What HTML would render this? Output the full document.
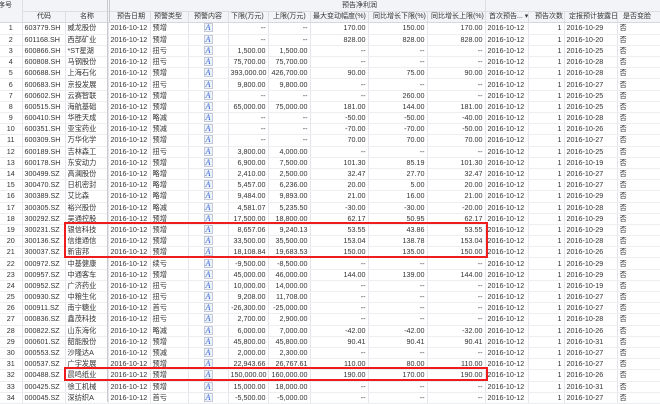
<!DOCTYPE html>
<html><head><meta charset="utf-8"><style>
*{margin:0;padding:0;box-sizing:border-box}
body{width:660px;height:402px;overflow:hidden;background:#fff;font-family:"Liberation Sans","Noto Sans CJK SC",sans-serif;font-size:7px;color:#333;position:relative}
.hd{position:absolute;left:0;top:0;width:660px;height:23px;background:#f3f4f7;border-bottom:1px solid #d6d8de}
.hd div{position:absolute;font-size:7px;line-height:11px;color:#333;white-space:nowrap}
.vl{position:absolute;width:1px;background:#dcdee4}
table{position:absolute;left:0;top:23px;border-collapse:collapse;table-layout:fixed;width:660px}
td{height:11.2px;line-height:10px;padding:0 2px;border-right:1px solid #e4e6ec;border-bottom:1px solid #eceef2;white-space:nowrap;overflow:hidden;font-size:7.2px}
tr{height:11.2px}
.c{text-align:center}.r{text-align:right}
.a{display:inline-block;width:9px;height:9px;border:1px solid #c4cad8;background:#eef2fa;color:#2b5bd0;font-style:italic;font-size:8px;line-height:8px;text-align:center;font-family:"Liberation Serif",serif;vertical-align:top}
.box{position:absolute;border:2px solid #ee1c1c}
</style></head><body>
<div class="hd">
<div style="left:-2px;top:0">序号</div>
<div style="left:342px;top:0">预告净利润</div>
<div style="left:22px;top:11px;width:638px;height:1px;background:#dcdee4"></div>
<div style="left:37px;top:11px">代码</div>
<div style="left:80px;top:11px">名称</div>
<div style="left:117px;top:11px">预告日期</div>
<div style="left:154px;top:11px">预警类型</div>
<div style="left:194px;top:11px">预警内容</div>
<div style="left:231px;top:11px">下限(万元)</div>
<div style="left:273px;top:11px">上限(万元)</div>
<div style="left:313px;top:11px">最大变动幅度(%)</div>
<div style="left:373px;top:11px">同比增长下限(%)</div>
<div style="left:431px;top:11px">同比增长上限(%)</div>
<div style="left:489px;top:11px">首次预告... ▾</div>
<div style="left:535px;top:11px">预告次数</div>
<div style="left:569px;top:11px">定报预计披露日</div>
<div style="left:623px;top:11px">是否变脸</div>
</div>
<div class="vl" style="left:22px;top:0;height:23px"></div>
<div class="vl" style="left:107px;top:0;height:23px;background:#c8cad0"></div>
<div class="vl" style="left:109px;top:0;height:23px;background:#c8cad0"></div>
<div class="vl" style="left:485px;top:0;height:11px"></div>
<div class="vl" style="left:65px;top:11px;height:12px"></div>
<div class="vl" style="left:150px;top:11px;height:12px"></div>
<div class="vl" style="left:188px;top:11px;height:12px"></div>
<div class="vl" style="left:228px;top:11px;height:12px"></div>
<div class="vl" style="left:268px;top:11px;height:12px"></div>
<div class="vl" style="left:310px;top:11px;height:12px"></div>
<div class="vl" style="left:368px;top:11px;height:12px"></div>
<div class="vl" style="left:427px;top:11px;height:12px"></div>
<div class="vl" style="left:485px;top:11px;height:12px"></div>
<div class="vl" style="left:528px;top:11px;height:12px"></div>
<div class="vl" style="left:564px;top:11px;height:12px"></div>
<div class="vl" style="left:617px;top:11px;height:12px"></div>
<table>
<colgroup><col style="width:22px"><col style="width:43px"><col style="width:43px"><col style="width:42px"><col style="width:38px"><col style="width:40px"><col style="width:40px"><col style="width:42px"><col style="width:58px"><col style="width:59px"><col style="width:58px"><col style="width:43px"><col style="width:36px"><col style="width:53px"><col style="width:43px"></colgroup>
<tr><td class="c">1</td><td>603779.SH</td><td>威龙股份</td><td>2016-10-12</td><td>预增</td><td class="c"><span class="a">A</span></td><td class="r">--</td><td class="r">--</td><td class="r">170.00</td><td class="r">150.00</td><td class="r">170.00</td><td>2016-10-12</td><td class="r">1</td><td>2016-10-29</td><td>否</td></tr>
<tr><td class="c">2</td><td>601168.SH</td><td>西部矿业</td><td>2016-10-12</td><td>预增</td><td class="c"><span class="a">A</span></td><td class="r">--</td><td class="r">--</td><td class="r">828.00</td><td class="r">828.00</td><td class="r">828.00</td><td>2016-10-12</td><td class="r">1</td><td>2016-10-20</td><td>否</td></tr>
<tr><td class="c">3</td><td>600866.SH</td><td>*ST星湖</td><td>2016-10-12</td><td>扭亏</td><td class="c"><span class="a">A</span></td><td class="r">1,500.00</td><td class="r">1,500.00</td><td class="r">--</td><td class="r">--</td><td class="r">--</td><td>2016-10-12</td><td class="r">1</td><td>2016-10-25</td><td>否</td></tr>
<tr><td class="c">4</td><td>600808.SH</td><td>马钢股份</td><td>2016-10-12</td><td>扭亏</td><td class="c"><span class="a">A</span></td><td class="r">75,700.00</td><td class="r">75,700.00</td><td class="r">--</td><td class="r">--</td><td class="r">--</td><td>2016-10-12</td><td class="r">1</td><td>2016-10-28</td><td>否</td></tr>
<tr><td class="c">5</td><td>600688.SH</td><td>上海石化</td><td>2016-10-12</td><td>预增</td><td class="c"><span class="a">A</span></td><td class="r">393,000.00</td><td class="r">426,700.00</td><td class="r">90.00</td><td class="r">75.00</td><td class="r">90.00</td><td>2016-10-12</td><td class="r">1</td><td>2016-10-28</td><td>否</td></tr>
<tr><td class="c">6</td><td>600683.SH</td><td>京投发展</td><td>2016-10-12</td><td>扭亏</td><td class="c"><span class="a">A</span></td><td class="r">9,800.00</td><td class="r">9,800.00</td><td class="r">--</td><td class="r">--</td><td class="r">--</td><td>2016-10-12</td><td class="r">1</td><td>2016-10-27</td><td>否</td></tr>
<tr><td class="c">7</td><td>600602.SH</td><td>云赛智联</td><td>2016-10-12</td><td>预增</td><td class="c"><span class="a">A</span></td><td class="r">--</td><td class="r">--</td><td class="r">--</td><td class="r">260.00</td><td class="r">--</td><td>2016-10-12</td><td class="r">1</td><td>2016-10-25</td><td>否</td></tr>
<tr><td class="c">8</td><td>600515.SH</td><td>海航基础</td><td>2016-10-12</td><td>预增</td><td class="c"><span class="a">A</span></td><td class="r">65,000.00</td><td class="r">75,000.00</td><td class="r">181.00</td><td class="r">144.00</td><td class="r">181.00</td><td>2016-10-12</td><td class="r">1</td><td>2016-10-25</td><td>否</td></tr>
<tr><td class="c">9</td><td>600410.SH</td><td>华胜天成</td><td>2016-10-12</td><td>略减</td><td class="c"><span class="a">A</span></td><td class="r">--</td><td class="r">--</td><td class="r">-50.00</td><td class="r">-50.00</td><td class="r">-40.00</td><td>2016-10-12</td><td class="r">1</td><td>2016-10-28</td><td>否</td></tr>
<tr><td class="c">10</td><td>600351.SH</td><td>亚宝药业</td><td>2016-10-12</td><td>预减</td><td class="c"><span class="a">A</span></td><td class="r">--</td><td class="r">--</td><td class="r">-70.00</td><td class="r">-70.00</td><td class="r">-50.00</td><td>2016-10-12</td><td class="r">1</td><td>2016-10-26</td><td>否</td></tr>
<tr><td class="c">11</td><td>600309.SH</td><td>万华化学</td><td>2016-10-12</td><td>预增</td><td class="c"><span class="a">A</span></td><td class="r">--</td><td class="r">--</td><td class="r">70.00</td><td class="r">70.00</td><td class="r">70.00</td><td>2016-10-12</td><td class="r">1</td><td>2016-10-27</td><td>否</td></tr>
<tr><td class="c">12</td><td>600189.SH</td><td>吉林森工</td><td>2016-10-12</td><td>扭亏</td><td class="c"><span class="a">A</span></td><td class="r">3,800.00</td><td class="r">4,000.00</td><td class="r">--</td><td class="r">--</td><td class="r">--</td><td>2016-10-12</td><td class="r">1</td><td>2016-10-25</td><td>否</td></tr>
<tr><td class="c">13</td><td>600178.SH</td><td>东安动力</td><td>2016-10-12</td><td>预增</td><td class="c"><span class="a">A</span></td><td class="r">6,900.00</td><td class="r">7,500.00</td><td class="r">101.30</td><td class="r">85.19</td><td class="r">101.30</td><td>2016-10-12</td><td class="r">1</td><td>2016-10-19</td><td>否</td></tr>
<tr><td class="c">14</td><td>300499.SZ</td><td>高澜股份</td><td>2016-10-12</td><td>略增</td><td class="c"><span class="a">A</span></td><td class="r">2,410.00</td><td class="r">2,500.00</td><td class="r">32.47</td><td class="r">27.70</td><td class="r">32.47</td><td>2016-10-12</td><td class="r">1</td><td>2016-10-27</td><td>否</td></tr>
<tr><td class="c">15</td><td>300470.SZ</td><td>日机密封</td><td>2016-10-12</td><td>略增</td><td class="c"><span class="a">A</span></td><td class="r">5,457.00</td><td class="r">6,236.00</td><td class="r">20.00</td><td class="r">5.00</td><td class="r">20.00</td><td>2016-10-12</td><td class="r">1</td><td>2016-10-27</td><td>否</td></tr>
<tr><td class="c">16</td><td>300389.SZ</td><td>艾比森</td><td>2016-10-12</td><td>略增</td><td class="c"><span class="a">A</span></td><td class="r">9,484.00</td><td class="r">9,893.00</td><td class="r">21.00</td><td class="r">16.00</td><td class="r">21.00</td><td>2016-10-12</td><td class="r">1</td><td>2016-10-29</td><td>否</td></tr>
<tr><td class="c">17</td><td>300305.SZ</td><td>裕兴股份</td><td>2016-10-12</td><td>略减</td><td class="c"><span class="a">A</span></td><td class="r">4,581.07</td><td class="r">5,235.50</td><td class="r">-30.00</td><td class="r">-30.00</td><td class="r">-20.00</td><td>2016-10-12</td><td class="r">1</td><td>2016-10-28</td><td>否</td></tr>
<tr><td class="c">18</td><td>300292.SZ</td><td>吴通控股</td><td>2016-10-12</td><td>预增</td><td class="c"><span class="a">A</span></td><td class="r">17,500.00</td><td class="r">18,800.00</td><td class="r">62.17</td><td class="r">50.95</td><td class="r">62.17</td><td>2016-10-12</td><td class="r">1</td><td>2016-10-29</td><td>否</td></tr>
<tr><td class="c">19</td><td>300231.SZ</td><td>银信科技</td><td>2016-10-12</td><td>预增</td><td class="c"><span class="a">A</span></td><td class="r">8,657.06</td><td class="r">9,240.13</td><td class="r">53.55</td><td class="r">43.86</td><td class="r">53.55</td><td>2016-10-12</td><td class="r">1</td><td>2016-10-29</td><td>否</td></tr>
<tr><td class="c">20</td><td>300136.SZ</td><td>信维通信</td><td>2016-10-12</td><td>预增</td><td class="c"><span class="a">A</span></td><td class="r">33,500.00</td><td class="r">35,500.00</td><td class="r">153.04</td><td class="r">138.78</td><td class="r">153.04</td><td>2016-10-12</td><td class="r">1</td><td>2016-10-28</td><td>否</td></tr>
<tr><td class="c">21</td><td>300037.SZ</td><td>新宙邦</td><td>2016-10-12</td><td>预增</td><td class="c"><span class="a">A</span></td><td class="r">18,108.84</td><td class="r">19,683.53</td><td class="r">150.00</td><td class="r">135.00</td><td class="r">150.00</td><td>2016-10-12</td><td class="r">1</td><td>2016-10-26</td><td>否</td></tr>
<tr><td class="c">22</td><td>000972.SZ</td><td>中基健康</td><td>2016-10-12</td><td>续亏</td><td class="c"><span class="a">A</span></td><td class="r">-9,500.00</td><td class="r">-8,500.00</td><td class="r">--</td><td class="r">--</td><td class="r">--</td><td>2016-10-12</td><td class="r">1</td><td>2016-10-29</td><td>否</td></tr>
<tr><td class="c">23</td><td>000957.SZ</td><td>中通客车</td><td>2016-10-12</td><td>预增</td><td class="c"><span class="a">A</span></td><td class="r">45,000.00</td><td class="r">46,000.00</td><td class="r">144.00</td><td class="r">139.00</td><td class="r">144.00</td><td>2016-10-12</td><td class="r">1</td><td>2016-10-29</td><td>否</td></tr>
<tr><td class="c">24</td><td>000952.SZ</td><td>广济药业</td><td>2016-10-12</td><td>扭亏</td><td class="c"><span class="a">A</span></td><td class="r">10,000.00</td><td class="r">14,000.00</td><td class="r">--</td><td class="r">--</td><td class="r">--</td><td>2016-10-12</td><td class="r">1</td><td>2016-10-19</td><td>否</td></tr>
<tr><td class="c">25</td><td>000930.SZ</td><td>中粮生化</td><td>2016-10-12</td><td>扭亏</td><td class="c"><span class="a">A</span></td><td class="r">9,208.00</td><td class="r">11,708.00</td><td class="r">--</td><td class="r">--</td><td class="r">--</td><td>2016-10-12</td><td class="r">1</td><td>2016-10-27</td><td>否</td></tr>
<tr><td class="c">26</td><td>000911.SZ</td><td>南宁糖业</td><td>2016-10-12</td><td>首亏</td><td class="c"><span class="a">A</span></td><td class="r">-26,300.00</td><td class="r">-25,000.00</td><td class="r">--</td><td class="r">--</td><td class="r">--</td><td>2016-10-12</td><td class="r">1</td><td>2016-10-27</td><td>否</td></tr>
<tr><td class="c">27</td><td>000836.SZ</td><td>鑫茂科技</td><td>2016-10-12</td><td>扭亏</td><td class="c"><span class="a">A</span></td><td class="r">2,700.00</td><td class="r">2,900.00</td><td class="r">--</td><td class="r">--</td><td class="r">--</td><td>2016-10-12</td><td class="r">1</td><td>2016-10-28</td><td>否</td></tr>
<tr><td class="c">28</td><td>000822.SZ</td><td>山东海化</td><td>2016-10-12</td><td>略减</td><td class="c"><span class="a">A</span></td><td class="r">6,000.00</td><td class="r">7,000.00</td><td class="r">-42.00</td><td class="r">-42.00</td><td class="r">-32.00</td><td>2016-10-12</td><td class="r">1</td><td>2016-10-26</td><td>否</td></tr>
<tr><td class="c">29</td><td>000601.SZ</td><td>韶能股份</td><td>2016-10-12</td><td>预增</td><td class="c"><span class="a">A</span></td><td class="r">45,800.00</td><td class="r">45,800.00</td><td class="r">90.41</td><td class="r">90.41</td><td class="r">90.41</td><td>2016-10-12</td><td class="r">1</td><td>2016-10-31</td><td>否</td></tr>
<tr><td class="c">30</td><td>000553.SZ</td><td>沙隆达A</td><td>2016-10-12</td><td>预减</td><td class="c"><span class="a">A</span></td><td class="r">2,000.00</td><td class="r">2,300.00</td><td class="r">--</td><td class="r">--</td><td class="r">--</td><td>2016-10-12</td><td class="r">1</td><td>2016-10-27</td><td>否</td></tr>
<tr><td class="c">31</td><td>000537.SZ</td><td>广宇发展</td><td>2016-10-12</td><td>预增</td><td class="c"><span class="a">A</span></td><td class="r">22,943.66</td><td class="r">26,767.61</td><td class="r">110.00</td><td class="r">80.00</td><td class="r">110.00</td><td>2016-10-12</td><td class="r">1</td><td>2016-10-27</td><td>否</td></tr>
<tr><td class="c">32</td><td>000488.SZ</td><td>晨鸣纸业</td><td>2016-10-12</td><td>预增</td><td class="c"><span class="a">A</span></td><td class="r">150,000.00</td><td class="r">160,000.00</td><td class="r">190.00</td><td class="r">170.00</td><td class="r">190.00</td><td>2016-10-12</td><td class="r">1</td><td>2016-10-26</td><td>否</td></tr>
<tr><td class="c">33</td><td>000425.SZ</td><td>徐工机械</td><td>2016-10-12</td><td>预增</td><td class="c"><span class="a">A</span></td><td class="r">15,000.00</td><td class="r">18,000.00</td><td class="r">--</td><td class="r">--</td><td class="r">--</td><td>2016-10-12</td><td class="r">1</td><td>2016-10-31</td><td>否</td></tr>
<tr><td class="c">34</td><td>000045.SZ</td><td>深纺织A</td><td>2016-10-12</td><td>首亏</td><td class="c"><span class="a">A</span></td><td class="r">-5,500.00</td><td class="r">-5,000.00</td><td class="r">--</td><td class="r">--</td><td class="r">--</td><td>2016-10-12</td><td class="r">1</td><td>2016-10-27</td><td>否</td></tr>
</table>
<div class="vl" style="left:107px;top:23px;height:379px;background:#c8cad0"></div>
<div class="box" style="left:64px;top:222px;width:424px;height:36px"></div>
<div class="box" style="left:64px;top:367px;width:424px;height:14px"></div>
</body></html>
